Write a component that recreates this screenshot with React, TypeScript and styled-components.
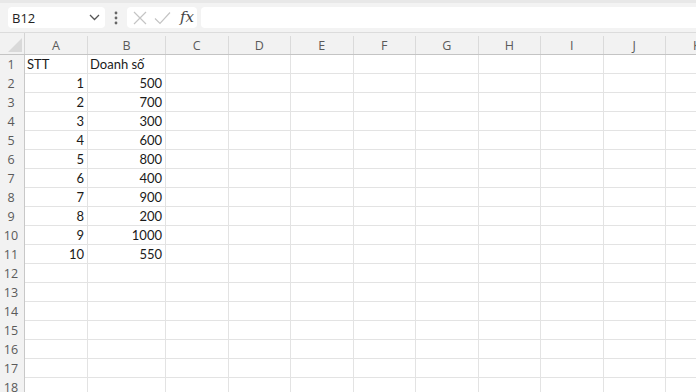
import React from "react";
import styled, { createGlobalStyle } from "styled-components";

const GlobalStyle = createGlobalStyle`
  html, body { margin: 0; padding: 0; background: #ffffff; overflow: hidden; }
  * { box-sizing: border-box; }
`;

const Page = styled.div`
  width: 696px;
  height: 392px;
  overflow: hidden;
  display: flex;
  flex-direction: column;
  background: #ffffff;
`;

const FormulaBar = styled.div`
  height: 33px;
  flex: none;
  display: flex;
  align-items: flex-start;
  padding: 7px 0 0 8px;
  background: #f3f3f3;
  border-top: 3px solid #e8e8e8;
  border-bottom: 1px solid #dcdcdc;
  padding-top: 4px;
`;

const NameBox = styled.div`
  width: 97px;
  height: 21px;
  background: #ffffff;
  border-radius: 4px;
  display: flex;
  align-items: center;
  justify-content: space-between;
  padding: 0 5px 0 4px;
  font-family: "Open Sans", "Noto Sans", sans-serif;
  font-size: 13px;
  color: #222;
`;

const Dots = styled.div`
  width: 22px;
  height: 21px;
  display: flex;
  align-items: center;
  justify-content: center;
`;

const IconGroup = styled.div`
  width: 70px;
  height: 21px;
  background: #ffffff;
  border-radius: 4px;
  display: flex;
  align-items: center;
  padding: 0 0 0 5px;
  gap: 6px;
`;

const Fx = styled.span`
  font-family: "DejaVu Serif", "Liberation Serif", serif;
  font-style: italic;
  font-size: 15px;
  color: #444;
  margin-left: 3px;
  line-height: 1;
`;

const FormulaInput = styled.div`
  flex: 1;
  height: 21px;
  margin-left: 4px;
  background: #ffffff;
  border-radius: 4px 0 0 4px;
`;

const cols = ["A", "B", "C", "D", "E", "F", "G", "H", "I", "J", "K"];
const colTemplate = "25px 63px 78px repeat(9, 62.5px)";

const HeaderRow = styled.div`
  display: grid;
  grid-template-columns: ${colTemplate};
  height: 22px;
  flex: none;
  background: #f2f2f2;
  border-bottom: 1px solid #c4c4c4;
`;

const Corner = styled.div`
  position: relative;
  border-right: 1px solid #d4d4d4;
`;

const CornerTriangle = styled.div`
  position: absolute;
  right: 2px;
  bottom: 2px;
  width: 0;
  height: 0;
  border-left: 14px solid transparent;
  border-bottom: 14px solid #d9d9d9;
`;

const ColHead = styled.div`
  display: flex;
  align-items: center;
  justify-content: center;
  border-right: 1px solid #dadada;
  margin-top: 3px;
  font-family: "Open Sans", "Noto Sans", sans-serif;
  font-size: 12.5px;
  color: #5a5a5a;
`;

const Row = styled.div`
  display: grid;
  grid-template-columns: ${colTemplate};
  height: 19px;
  flex: none;
`;

const RowHead = styled.div`
  background: #f2f2f2;
  border-right: 1px solid #c8c8c8;
  display: flex;
  align-items: center;
  justify-content: center;
  font-family: "Open Sans", "Noto Sans", sans-serif;
  font-size: 12.5px;
  color: #5a5a5a;
  padding-right: 2px;
`;

const Cell = styled.div<{ $num?: boolean }>`
  border-right: 1px solid #e3e3e3;
  border-bottom: 1px solid #e3e3e3;
  display: flex;
  align-items: center;
  justify-content: ${(p) => (p.$num ? "flex-end" : "flex-start")};
  padding: 0 3px 0 2px;
  font-family: "Lato", "Open Sans", sans-serif;
  font-size: 13px;
  color: #1a1a1a;
  white-space: nowrap;
  overflow: hidden;
`;

const values = [500, 700, 300, 600, 800, 400, 900, 200, 1000, 550];

type CellVal = { text: string; num?: boolean };

function rowData(r: number): CellVal[] {
  if (r === 1) return [{ text: "STT" }, { text: "Doanh số" }];
  if (r >= 2 && r <= 11)
    return [
      { text: String(r - 1), num: true },
      { text: String(values[r - 2]), num: true },
    ];
  return [];
}

const ChevronIcon = () => (
  <svg width="11" height="7" viewBox="0 0 11 7">
    <path d="M1 1 L5.5 5.5 L10 1" fill="none" stroke="#555" strokeWidth="1.3" />
  </svg>
);

const DotsIcon = () => (
  <svg width="4" height="14" viewBox="0 0 4 14">
    <circle cx="2" cy="2" r="1.4" fill="#666" />
    <circle cx="2" cy="7" r="1.4" fill="#666" />
    <circle cx="2" cy="12" r="1.4" fill="#666" />
  </svg>
);

const CrossIcon = () => (
  <svg width="16" height="16" viewBox="0 0 16 16">
    <path d="M2 2 L14 14 M14 2 L2 14" stroke="#c4c4c4" strokeWidth="1.2" fill="none" />
  </svg>
);

const CheckIcon = () => (
  <svg width="17" height="16" viewBox="0 0 17 16">
    <path d="M1 8.5 L6 13.5 L16 2.5" stroke="#c4c4c4" strokeWidth="1.2" fill="none" />
  </svg>
);

export default function App() {
  const rows = Array.from({ length: 18 }, (_, i) => i + 1);
  return (
    <>
      <GlobalStyle />
      <Page>
        <FormulaBar>
          <NameBox>
            <span>B12</span>
            <ChevronIcon />
          </NameBox>
          <Dots>
            <DotsIcon />
          </Dots>
          <IconGroup>
            <CrossIcon />
            <CheckIcon />
            <Fx>fx</Fx>
          </IconGroup>
          <FormulaInput />
        </FormulaBar>
        <HeaderRow>
          <Corner>
            <CornerTriangle />
          </Corner>
          {cols.map((c) => (
            <ColHead key={c}>{c}</ColHead>
          ))}
        </HeaderRow>
        {rows.map((r) => {
          const data = rowData(r);
          return (
            <Row key={r}>
              <RowHead>{r}</RowHead>
              {cols.map((c, i) => {
                const d = data[i];
                return (
                  <Cell key={c} $num={d?.num}>
                    {d ? d.text : ""}
                  </Cell>
                );
              })}
            </Row>
          );
        })}
      </Page>
    </>
  );
}
